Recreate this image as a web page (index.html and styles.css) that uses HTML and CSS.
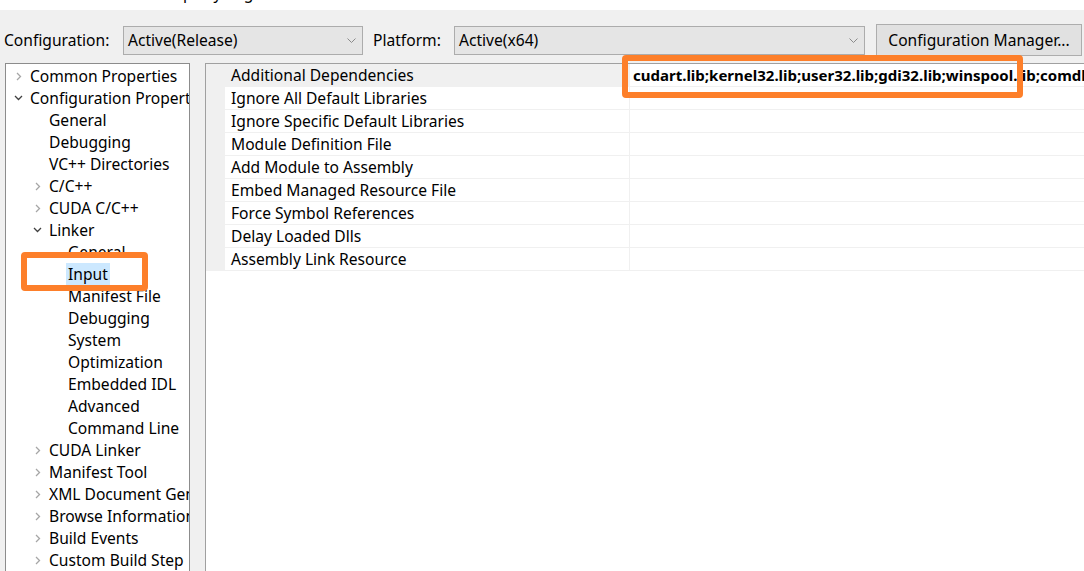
FILE: index.html
```html
<!DOCTYPE html>
<html>
<head>
<meta charset="utf-8">
<link rel="stylesheet" href="styles.css">
</head>
<body>
<div class="titlebar"><span class="title-text">Property Pages</span></div>

<div class="toolbar">
  <span class="lbl lbl-config">Configuration:</span>
  <div class="combo combo-config">
    <span>Active(Release)</span>
    <svg class="chev" width="9" height="5" viewBox="0 0 9 5"><polyline points="0.5,0.5 4.5,4.5 8.5,0.5" fill="none" stroke="#8a8a8a" stroke-width="1"/></svg>
  </div>
  <span class="lbl lbl-platform">Platform:</span>
  <div class="combo combo-platform">
    <span>Active(x64)</span>
    <svg class="chev" width="9" height="5" viewBox="0 0 9 5"><polyline points="0.5,0.5 4.5,4.5 8.5,0.5" fill="none" stroke="#8a8a8a" stroke-width="1"/></svg>
  </div>
  <div class="btn">Configuration Manager...</div>
</div>

<div class="main">
  <div class="tree">
    <div class="node l0"><span class="tw"><svg width="6" height="9" viewBox="0 0 6 9"><polyline points="1,1 4.5,4.5 1,8" fill="none" stroke="#a6a6a6" stroke-width="1.3"/></svg></span>Common Properties</div>
    <div class="node l0"><span class="tw"><svg width="9" height="6" viewBox="0 0 9 6"><polyline points="1,1 4.5,4.5 8,1" fill="none" stroke="#404040" stroke-width="1.3"/></svg></span>Configuration Properties</div>
    <div class="node l1"><span class="tw"></span>General</div>
    <div class="node l1"><span class="tw"></span>Debugging</div>
    <div class="node l1"><span class="tw"></span>VC++ Directories</div>
    <div class="node l1"><span class="tw"><svg width="6" height="9" viewBox="0 0 6 9"><polyline points="1,1 4.5,4.5 1,8" fill="none" stroke="#a6a6a6" stroke-width="1.3"/></svg></span>C/C++</div>
    <div class="node l1"><span class="tw"><svg width="6" height="9" viewBox="0 0 6 9"><polyline points="1,1 4.5,4.5 1,8" fill="none" stroke="#a6a6a6" stroke-width="1.3"/></svg></span>CUDA C/C++</div>
    <div class="node l1"><span class="tw"><svg width="9" height="6" viewBox="0 0 9 6"><polyline points="1,1 4.5,4.5 8,1" fill="none" stroke="#404040" stroke-width="1.3"/></svg></span>Linker</div>
    <div class="node l2">General</div>
    <div class="node l2"><span class="sel">Input</span></div>
    <div class="node l2">Manifest File</div>
    <div class="node l2">Debugging</div>
    <div class="node l2">System</div>
    <div class="node l2">Optimization</div>
    <div class="node l2">Embedded IDL</div>
    <div class="node l2">Advanced</div>
    <div class="node l2">Command Line</div>
    <div class="node l1"><span class="tw"><svg width="6" height="9" viewBox="0 0 6 9"><polyline points="1,1 4.5,4.5 1,8" fill="none" stroke="#a6a6a6" stroke-width="1.3"/></svg></span>CUDA Linker</div>
    <div class="node l1"><span class="tw"><svg width="6" height="9" viewBox="0 0 6 9"><polyline points="1,1 4.5,4.5 1,8" fill="none" stroke="#a6a6a6" stroke-width="1.3"/></svg></span>Manifest Tool</div>
    <div class="node l1"><span class="tw"><svg width="6" height="9" viewBox="0 0 6 9"><polyline points="1,1 4.5,4.5 1,8" fill="none" stroke="#a6a6a6" stroke-width="1.3"/></svg></span>XML Document Generator</div>
    <div class="node l1"><span class="tw"><svg width="6" height="9" viewBox="0 0 6 9"><polyline points="1,1 4.5,4.5 1,8" fill="none" stroke="#a6a6a6" stroke-width="1.3"/></svg></span>Browse Information</div>
    <div class="node l1"><span class="tw"><svg width="6" height="9" viewBox="0 0 6 9"><polyline points="1,1 4.5,4.5 1,8" fill="none" stroke="#a6a6a6" stroke-width="1.3"/></svg></span>Build Events</div>
    <div class="node l1"><span class="tw"><svg width="6" height="9" viewBox="0 0 6 9"><polyline points="1,1 4.5,4.5 1,8" fill="none" stroke="#a6a6a6" stroke-width="1.3"/></svg></span>Custom Build Step</div>
  </div>

  <div class="grid">
    <div class="row active">
      <div class="gut"></div>
      <div class="name">Additional Dependencies</div>
      <div class="val"><span class="edit">cudart.lib;kernel32.lib;user32.lib;gdi32.lib;winspool.lib;comdlg32.lib;advapi32.lib;shell32.lib;ole32.lib;oleaut32.lib;uuid.lib;odbc32.lib;odbccp32.lib;%(AdditionalDependencies)</span></div>
    </div>
    <div class="row"><div class="gut"></div><div class="name">Ignore All Default Libraries</div><div class="val"></div></div>
    <div class="row"><div class="gut"></div><div class="name">Ignore Specific Default Libraries</div><div class="val"></div></div>
    <div class="row"><div class="gut"></div><div class="name">Module Definition File</div><div class="val"></div></div>
    <div class="row"><div class="gut"></div><div class="name">Add Module to Assembly</div><div class="val"></div></div>
    <div class="row"><div class="gut"></div><div class="name">Embed Managed Resource File</div><div class="val"></div></div>
    <div class="row"><div class="gut"></div><div class="name">Force Symbol References</div><div class="val"></div></div>
    <div class="row"><div class="gut"></div><div class="name">Delay Loaded Dlls</div><div class="val"></div></div>
    <div class="row"><div class="gut"></div><div class="name">Assembly Link Resource</div><div class="val"></div></div>
  </div>
</div>

<div class="mark mark-input"></div>
<div class="mark mark-deps"></div>
</body>
</html>
```

FILE: styles.css
```css
html, body {
  margin: 0;
  padding: 0;
}
body {
  width: 1084px;
  height: 571px;
  overflow: hidden;
  background: #f0f0f0;
  font-family: "Noto Sans", "Open Sans", sans-serif;
  font-size: 15.6px;
  color: #000;
  position: relative;
}
.titlebar {
  height: 10px;
  background: #fff;
  overflow: hidden;
  padding-left: 158px;
}
.title-text {
  display: block;
  line-height: 20px;
  margin-top: -17px;
}
.toolbar {
  display: flex;
  align-items: center;
  height: 32px;
  padding: 14px 0 0 4px;
}
.lbl {
  white-space: nowrap;
}
.lbl-config { width: 119px; }
.lbl-platform { width: 81px; margin-left: 10px; }
.combo {
  box-sizing: border-box;
  height: 29px;
  background: #e5e5e5;
  border: 1px solid #acacac;
  display: flex;
  align-items: center;
  justify-content: space-between;
  padding: 0 6px 0 4px;
}
.combo-config { width: 240px; }
.combo-platform { width: 411px; }
.chev { display: block; }
.btn {
  box-sizing: border-box;
  width: 206px;
  height: 32px;
  margin-left: 11px;
  background: #e1e1e1;
  border: 1px solid #adadad;
  display: flex;
  align-items: center;
  justify-content: center;
  white-space: nowrap;
}
.main {
  display: flex;
  gap: 15px;
  margin-top: 7px;
  padding-left: 5px;
}
.tree {
  box-sizing: border-box;
  width: 185px;
  height: 520px;
  flex: none;
  background: #fff;
  border: 1px solid #8c8c8c;
  padding-top: 1px;
  overflow: hidden;
}
.node {
  height: 22px;
  line-height: 22px;
  white-space: nowrap;
  display: flex;
  align-items: center;
}
.node.l0 { padding-left: 5px; }
.node.l1 { padding-left: 24px; }
.node.l2 { padding-left: 62px; }
.tw {
  width: 19px;
  flex: none;
  display: flex;
  align-items: center;
  justify-content: center;
  padding-right: 4px;
  box-sizing: border-box;
}
.tw svg { display: block; }
.sel {
  background: #cce8ff;
  padding: 0 2px;
  margin-left: -2px;
}
.grid {
  flex: 1;
  height: 520px;
  margin-right: -20px;
  background: #fff;
  border: 1px solid #a0a0a0;
  overflow: hidden;
}
.row {
  display: flex;
  height: 22px;
  border-bottom: 1px solid #f0f0f0;
}
.gut {
  width: 19px;
  flex: none;
  background: #f0f0f0;
}
.name {
  width: 398px;
  flex: none;
  padding-left: 6px;
  line-height: 23px;
  white-space: nowrap;
  border-right: 1px solid #f0f0f0;
}
.row.active .name { background: #f0f0f0; }
.val {
  flex: 1;
  min-width: 0;
  overflow: hidden;
  white-space: nowrap;
  line-height: 23px;
  padding-left: 3px;
}
.edit {
  font-weight: bold;
  font-size: 15px;
}
.mark {
  position: absolute;
  box-sizing: border-box;
  border: 6px solid #fd7f2a;
  border-radius: 4px;
}
.mark-input {
  left: 21px;
  top: 252px;
  width: 127px;
  height: 39px;
}
.mark-deps {
  left: 622px;
  top: 55px;
  width: 401px;
  height: 43px;
}
```
